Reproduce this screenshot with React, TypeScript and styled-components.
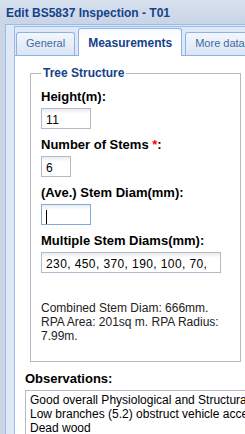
import React from 'react';
import styled, { createGlobalStyle } from 'styled-components';

const GlobalStyle = createGlobalStyle`
    html, body {
        margin: 0;
        padding: 0;
        overflow: hidden;
        background: #cbd6e4;
        font-family: 'Liberation Sans', Arial, sans-serif;
    }
`;

const Window = styled.div`
    width: 320px;
    height: 434px;
    display: flex;
    flex-direction: column;
    background: #cbd6e4;
`;

const TitleBar = styled.div`
    height: 25px;
    box-sizing: border-box;
    padding: 2px 0 0 6px;
    line-height: 22px;
    font-size: 12px;
    font-weight: bold;
    color: #15428b;
    background: linear-gradient(#d7e1ee, #c8d5e6);
`;

const Frame = styled.div`
    flex: 1;
    display: flex;
    margin-left: 5px;
    padding: 1px 0 0 8px;
    border-top: 1px solid #99bbe8;
    border-left: 1px solid #99bbe8;
    background: #dfe8f6;
`;

const TabPanel = styled.div`
    flex: 1;
    display: flex;
    flex-direction: column;
    border-top: 1px solid #99bbe8;
    border-left: 1px solid #99bbe8;
`;

const TabStrip = styled.div`
    display: flex;
    align-items: flex-end;
    gap: 3px;
    height: 28px;
    padding-left: 1px;
    border-bottom: 1px solid #8db2e3;
`;

const Tab = styled.div<{ $active?: boolean }>`
    box-sizing: border-box;
    height: ${(p) => (p.$active ? '28px' : '23px')};
    margin-bottom: ${(p) => (p.$active ? '-1px' : '0')};
    padding: ${(p) => (p.$active ? '6px 9px 0' : '2px 9px 0')};
    border: 1px solid #8db2e3;
    border-bottom: none;
    border-radius: 3px 3px 0 0;
    line-height: 16px;
    white-space: nowrap;
    font-size: ${(p) => (p.$active ? '12px' : '11px')};
    font-weight: ${(p) => (p.$active ? 'bold' : 'normal')};
    color: ${(p) => (p.$active ? '#15428b' : '#416aa3')};
    background: ${(p) =>
        p.$active ? 'linear-gradient(#f7faff, #ffffff 40%)' : 'linear-gradient(#f3f7fc, #dae5f4)'};
`;

const Body = styled.div`
    flex: 1;
    padding: 10px 0 0 10px;
    background: #ffffff;
`;

const FieldSet = styled.fieldset`
    width: 211px;
    box-sizing: border-box;
    margin: 0 0 9px 5px;
    padding: 9px 10px 18px;
    border: 1px solid #b5b8c8;
`;

const Legend = styled.legend`
    padding: 0 2px;
    font-size: 12px;
    line-height: 14px;
    font-weight: bold;
    color: #15428b;
`;

const Label = styled.label`
    display: block;
    margin-bottom: 4px;
    font-size: 13px;
    line-height: 15px;
    font-weight: bold;
    color: #000;
    white-space: nowrap;
`;

const Required = styled.span`
    color: #ff0000;
`;

const FieldWrap = styled.div`
    position: relative;
    margin-bottom: 8px;
`;

const TextField = styled.input<{ $width: number; $focused?: boolean }>`
    display: block;
    box-sizing: border-box;
    width: ${(p) => p.$width}px;
    height: 21px;
    margin: 0;
    padding: 2px 4px 0;
    border: 1px solid ${(p) => (p.$focused ? '#7eadd9' : '#b5b8c8')};
    background: linear-gradient(#ececec, #ffffff 5px);
    font-family: 'Liberation Sans', Arial, sans-serif;
    font-size: 12px;
    letter-spacing: 0.4px;
    color: #000;
    outline: none;
`;

const Caret = styled.span`
    position: absolute;
    left: 5px;
    top: 6px;
    width: 1px;
    height: 14px;
    background: #000;
`;

const Summary = styled.div`
    margin-top: 28px;
    font-size: 12px;
    line-height: 14px;
    color: #222;
`;

const NotesArea = styled.textarea`
    display: block;
    box-sizing: border-box;
    width: 250px;
    height: 60px;
    margin: 0;
    padding: 2px 4px;
    border: 1px solid #b5b8c8;
    background: #fff;
    font-family: 'Liberation Sans', Arial, sans-serif;
    font-size: 12px;
    line-height: 14px;
    color: #000;
    resize: none;
    overflow: hidden;
    white-space: pre;
`;

const OBSERVATIONS =
    'Good overall Physiological and Structural condition.\nLow branches (5.2) obstruct vehicle access.\nDead wood';

export default function App() {
    return (
        <>
            <GlobalStyle />
            <Window>
                <TitleBar>Edit BS5837 Inspection - T01</TitleBar>
                <Frame>
                    <TabPanel>
                        <TabStrip>
                            <Tab>General</Tab>
                            <Tab $active>Measurements</Tab>
                            <Tab>More data</Tab>
                        </TabStrip>
                        <Body>
                            <FieldSet>
                                <Legend>Tree Structure</Legend>
                                <Label>Height(m):</Label>
                                <FieldWrap>
                                    <TextField $width={50} defaultValue="11" readOnly />
                                </FieldWrap>
                                <Label>
                                    Number of Stems <Required>*</Required>:
                                </Label>
                                <FieldWrap>
                                    <TextField $width={30} defaultValue="6" readOnly />
                                </FieldWrap>
                                <Label>(Ave.) Stem Diam(mm):</Label>
                                <FieldWrap>
                                    <TextField $width={50} $focused defaultValue="" readOnly />
                                    <Caret />
                                </FieldWrap>
                                <Label>Multiple Stem Diams(mm):</Label>
                                <FieldWrap>
                                    <TextField $width={180} defaultValue="230, 450, 370, 190, 100, 70," readOnly />
                                </FieldWrap>
                                <Summary>
                                    Combined Stem Diam: 666mm. RPA Area: 201sq m. RPA Radius: 7.99m.
                                </Summary>
                            </FieldSet>
                            <Label>Observations:</Label>
                            <NotesArea wrap="off" defaultValue={OBSERVATIONS} readOnly />
                        </Body>
                    </TabPanel>
                </Frame>
            </Window>
        </>
    );
}
